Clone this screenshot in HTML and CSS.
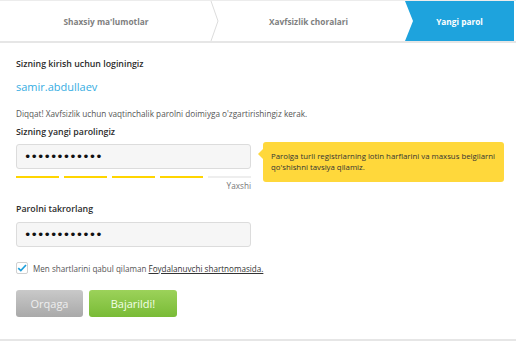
FILE: index.html
```html
<!DOCTYPE html>
<html lang="uz">
<head>
    <meta charset="UTF-8">
    <meta name="viewport" content="width=device-width, initial-scale=1.0">
    <title>Yangi parol</title>
    <link rel="stylesheet" href="styles.css">
</head>
<body>
    <div id="wizard">
        <div class="steps">
            <div class="step step-first">Shaxsiy ma'lumotlar</div>
            <div class="step step-second">Xavfsizlik choralari</div>
            <div class="step step-active">Yangi parol</div>
        </div>

        <div class="form">
            <div class="label">Sizning kirish uchun loginingiz</div>
            <div class="login">samir.abdullaev</div>
            <div class="notice">Diqqat! Xavfsizlik uchun vaqtinchalik parolni doimiyga o'zgartirishingiz kerak.</div>

            <div class="label">Sizning yangi parolingiz</div>
            <div class="pass-row">
                <div class="pass-col">
                    <input class="field" type="password" value="123456789012">
                    <div class="strength">
                        <span class="bar on"></span>
                        <span class="bar on"></span>
                        <span class="bar on"></span>
                        <span class="bar on"></span>
                        <span class="bar"></span>
                    </div>
                    <div class="strength-txt">Yaxshi</div>
                </div>
                <div class="hint">Parolga turli registrlarning lotin harflarini va maxsus belgilarni qo'shishni tavsiya qilamiz.</div>
            </div>

            <div class="label label-repeat">Parolni takrorlang</div>
            <input class="field" type="password" value="123456789012">

            <label class="agree">
                <span class="check">
                    <svg width="12" height="10" viewBox="0 0 12 10"><path d="M1.5 5.2 L4.6 8.2 L10.8 1.4" fill="none" stroke="#1e9fdb" stroke-width="2"/></svg>
                </span>
                <span>Men shartlarini qabul qilaman <a href="#">Foydalanuvchi shartnomasida.</a></span>
            </label>

            <div class="buttons">
                <button class="btn btn-back">Orqaga</button>
                <button class="btn btn-done">Bajarildi!</button>
            </div>
        </div>
    </div>
</body>
</html>
```

FILE: styles.css
```css
body {
    margin: 0;
    font-family: "Open Sans", "DejaVu Sans", sans-serif;
    color: #333;
    background-color: #fff;
}

#wizard {
    width: 516px;
    height: 339px;
    border-bottom: 2px solid #e6e6e6;
}

.steps {
    display: flex;
    height: 40px;
    border-top: 1px solid #ececec;
    border-bottom: 2px solid #e6e6e6;
}

.step {
    position: relative;
    display: flex;
    align-items: center;
    justify-content: center;
    font-size: 8.3px;
    font-weight: bold;
    color: #808080;
}

.step-first {
    width: 212px;
}

.step-first::after {
    content: "";
    position: absolute;
    right: -8px;
    top: 0;
    width: 10px;
    height: 40px;
    background: url("data:image/svg+xml;utf8,<svg xmlns='http://www.w3.org/2000/svg' width='10' height='40'><polyline points='1,0 8,20 1,40' fill='none' stroke='%23dcdcdc' stroke-width='1'/></svg>");
}

.step-second {
    width: 193px;
}

.step-active {
    width: 109px;
    background-color: #1ea3dd;
    color: #fff;
    clip-path: polygon(0 0, 100% 0, 100% 100%, 0 100%, 8px 50%);
}

.form {
    padding: 15px 16px 0;
}

.label {
    font-size: 8.8px;
    font-weight: 600;
    line-height: 13px;
    color: #2b2b2b;
}

.login {
    margin-top: 8px;
    font-size: 11px;
    line-height: 16px;
    color: #35ade2;
}

.notice {
    margin-top: 13px;
    font-size: 8.2px;
    line-height: 12px;
    color: #555;
}

.notice + .label {
    margin-top: 6px;
}

.pass-row {
    display: flex;
    align-items: flex-start;
    margin-top: 5px;
}

.pass-col {
    flex-shrink: 0;
    width: 235px;
}

.field {
    display: block;
    box-sizing: border-box;
    width: 235px;
    height: 25px;
    padding: 0 7px;
    border: 1px solid #dcdcdc;
    border-radius: 3px;
    background-color: #f6f6f6;
    font-family: "DejaVu Sans", sans-serif;
    font-size: 12.5px;
    letter-spacing: -0.9px;
    color: #111;
}

.strength {
    display: flex;
    gap: 5px;
    margin-top: 7px;
}

.bar {
    flex: 1;
    height: 2px;
    background-color: #eeeeee;
}

.bar.on {
    background-color: #ffd500;
}

.strength-txt {
    margin-top: 2px;
    text-align: right;
    font-size: 8.2px;
    line-height: 12px;
    color: #777;
}

.hint {
    position: relative;
    flex-shrink: 0;
    box-sizing: border-box;
    width: 241px;
    margin-left: 12px;
    margin-top: -2px;
    padding: 9px 8px;
    border-radius: 3px;
    background-color: #ffd83b;
    font-size: 7.8px;
    line-height: 11px;
    color: #333;
}

.hint::before {
    content: "";
    position: absolute;
    left: -5px;
    top: 7px;
    border-top: 5px solid transparent;
    border-bottom: 5px solid transparent;
    border-right: 5px solid #ffd83b;
}

.label-repeat {
    margin-top: 11px;
    margin-bottom: 6px;
}

.agree {
    display: flex;
    align-items: center;
    gap: 5px;
    margin-top: 15px;
    font-size: 8.1px;
    color: #555;
}

.agree a {
    color: #333;
}

.check {
    display: flex;
    align-items: center;
    justify-content: center;
    box-sizing: border-box;
    width: 12px;
    height: 12px;
    border: 1px solid #d0d0d0;
    border-radius: 2px;
    background-color: #fff;
}

.buttons {
    display: flex;
    gap: 6px;
    margin-top: 16px;
}

.btn {
    height: 27px;
    border: none;
    border-radius: 3px;
    font-family: "Open Sans", sans-serif;
    font-size: 11px;
    cursor: pointer;
}

.btn-back {
    width: 67px;
    background: linear-gradient(#c9c9c9, #a9a9a9);
    color: #eeeeee;
}

.btn-done {
    width: 88px;
    background: linear-gradient(#9cd25a, #79bb36);
    color: #f4ffe8;
}
```
